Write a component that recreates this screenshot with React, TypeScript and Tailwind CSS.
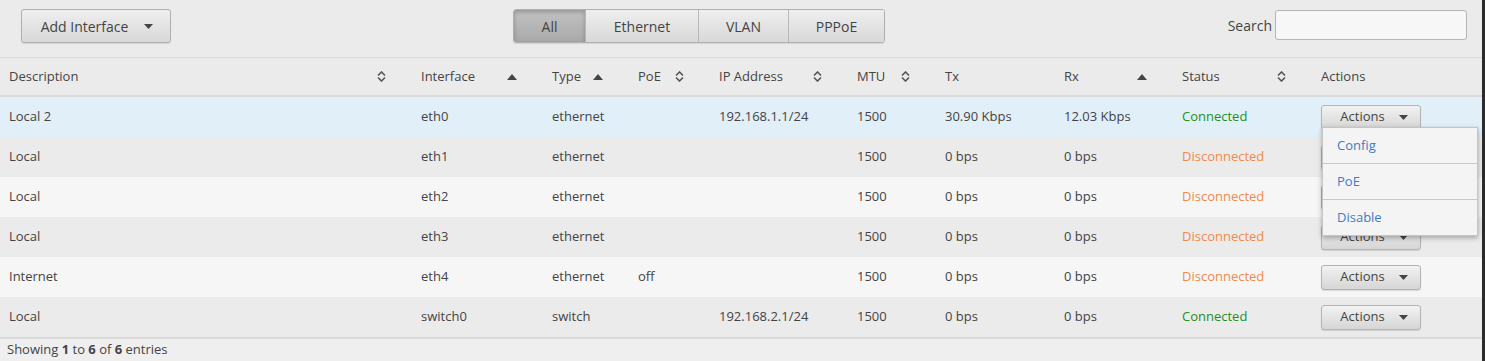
import React from 'react';

type Row = {
  desc: string;
  iface: string;
  type: string;
  poe: string;
  ip: string;
  mtu: string;
  tx: string;
  rx: string;
  connected: boolean;
};

const rows: Row[] = [
  { desc: 'Local 2', iface: 'eth0', type: 'ethernet', poe: '', ip: '192.168.1.1/24', mtu: '1500', tx: '30.90 Kbps', rx: '12.03 Kbps', connected: true },
  { desc: 'Local', iface: 'eth1', type: 'ethernet', poe: '', ip: '', mtu: '1500', tx: '0 bps', rx: '0 bps', connected: false },
  { desc: 'Local', iface: 'eth2', type: 'ethernet', poe: '', ip: '', mtu: '1500', tx: '0 bps', rx: '0 bps', connected: false },
  { desc: 'Local', iface: 'eth3', type: 'ethernet', poe: '', ip: '', mtu: '1500', tx: '0 bps', rx: '0 bps', connected: false },
  { desc: 'Internet', iface: 'eth4', type: 'ethernet', poe: 'off', ip: '', mtu: '1500', tx: '0 bps', rx: '0 bps', connected: false },
  { desc: 'Local', iface: 'switch0', type: 'switch', poe: '', ip: '192.168.2.1/24', mtu: '1500', tx: '0 bps', rx: '0 bps', connected: true },
];

const rowBg = ['bg-[#e1eff8]', 'bg-[#ebebeb]', 'bg-[#f6f6f6]', 'bg-[#ebebeb]', 'bg-[#f6f6f6]', 'bg-[#ebebeb]'];

function Caret() {
  return (
    <svg width="9" height="5" viewBox="0 0 9 5" className="inline-block">
      <path d="M0 0h9L4.5 5z" fill="#444" />
    </svg>
  );
}

function SortBoth() {
  return (
    <svg width="9" height="11" viewBox="0 0 9 11">
      <path d="M1 4.5 4.5 1 8 4.5M1 6.5 4.5 10 8 6.5" fill="none" stroke="#555" strokeWidth="1.6" />
    </svg>
  );
}

function SortAsc() {
  return (
    <svg width="10" height="6" viewBox="0 0 10 6">
      <path d="M0 6h10L5 0z" fill="#444" />
    </svg>
  );
}

const cols: { label: string; w: string; sort: 'both' | 'asc' | null }[] = [
  { label: 'Description', w: 'w-[412px]', sort: 'both' },
  { label: 'Interface', w: 'w-[131px]', sort: 'asc' },
  { label: 'Type', w: 'w-[86px]', sort: 'asc' },
  { label: 'PoE', w: 'w-[81px]', sort: 'both' },
  { label: 'IP Address', w: 'w-[138px]', sort: 'both' },
  { label: 'MTU', w: 'w-[88px]', sort: 'both' },
  { label: 'Tx', w: 'w-[119px]', sort: null },
  { label: 'Rx', w: 'w-[118px]', sort: 'asc' },
  { label: 'Status', w: 'w-[139px]', sort: 'both' },
  { label: 'Actions', w: 'flex-1', sort: null },
];

function ActionsButton() {
  return (
    <button className="flex h-[25px] w-[100px] items-center justify-center gap-[14px] rounded-[3px] border border-[#b3b3b3] bg-gradient-to-b from-[#f2f2f2] to-[#d6d6d6] pl-[6px] text-[13px] text-[#444] shadow-[0_1px_1px_rgba(0,0,0,0.12)]">
      <span>Actions</span>
      <Caret />
    </button>
  );
}

export default function App() {
  return (
    <div className="flex h-[361px] w-[1485px] bg-[#2b2b2b] font-['Open_Sans',sans-serif] text-[13px] text-[#444]">
      <div className="relative flex w-[1482px] flex-col bg-[#ebebeb]">
        {/* toolbar */}
        <div className="flex h-[58px] items-start border-b border-[#d9d9d9] pt-[9px]">
          <div className="w-[513px] pl-[21px]">
            <button className="flex h-[34px] w-[150px] items-center justify-center gap-[16px] rounded-[3px] border border-[#b0b0b0] bg-gradient-to-b from-[#efefef] to-[#d8d8d8] pl-[2px] text-[14px] text-[#444] shadow-[0_1px_1px_rgba(0,0,0,0.1)]">
              <span>Add Interface</span>
              <Caret />
            </button>
          </div>
          <div className="flex h-[34px] overflow-hidden rounded-[3px] border border-[#b0b0b0] text-[14px] shadow-[0_1px_1px_rgba(0,0,0,0.1)]">
            <div className="flex w-[71px] items-center justify-center bg-gradient-to-b from-[#c2c2c2] to-[#a9a9a9] shadow-[inset_0_2px_4px_rgba(0,0,0,0.25)]">All</div>
            <div className="flex w-[113px] items-center justify-center border-l border-[#b8b8b8] bg-gradient-to-b from-[#efefef] to-[#d8d8d8]">Ethernet</div>
            <div className="flex w-[90px] items-center justify-center border-l border-[#b8b8b8] bg-gradient-to-b from-[#efefef] to-[#d8d8d8]">VLAN</div>
            <div className="flex w-[96px] items-center justify-center border-l border-[#b8b8b8] bg-gradient-to-b from-[#efefef] to-[#d8d8d8]">PPPoE</div>
          </div>
          <div className="ml-auto flex items-center gap-[3px] pr-[15px] pt-[1px]">
            <span className="text-[14px]">Search</span>
            <input className="h-[30px] w-[192px] rounded-[3px] border border-[#b5b5b5] bg-[#f7f7f7] outline-none" />
          </div>
        </div>

        {/* header */}
        <div className="flex h-[39px] items-center border-b-2 border-[#d9d9d9]">
          {cols.map((c) => (
            <div key={c.label} className={`${c.w} flex items-center pl-[9px]`}>
              <span>{c.label}</span>
              {c.sort && (
                <span className="ml-auto mr-[26px] flex w-[10px] justify-center">
                  {c.sort === 'both' ? <SortBoth /> : <SortAsc />}
                </span>
              )}
            </div>
          ))}
        </div>

        {/* rows */}
        {rows.map((r, i) => (
          <div key={i} className={`flex h-[40px] items-center ${rowBg[i]}`}>
            <div className="w-[412px] pl-[9px]">{r.desc}</div>
            <div className="w-[131px] pl-[9px]">{r.iface}</div>
            <div className="w-[86px] pl-[9px]">{r.type}</div>
            <div className="w-[81px] pl-[9px]">{r.poe}</div>
            <div className="w-[138px] pl-[9px]">{r.ip}</div>
            <div className="w-[88px] pl-[9px]">{r.mtu}</div>
            <div className="w-[119px] pl-[9px]">{r.tx}</div>
            <div className="w-[118px] pl-[9px]">{r.rx}</div>
            <div className={`w-[139px] pl-[9px] ${r.connected ? 'text-[#1f8f1f]' : 'text-[#f08a4b]'}`}>
              {r.connected ? 'Connected' : 'Disconnected'}
            </div>
            <div className="flex-1 pl-[9px]">
              <ActionsButton />
            </div>
          </div>
        ))}

        {/* footer */}
        <div className="flex flex-1 items-center border-t-2 border-[#dadada] bg-[#efefef] pl-[7px]">
          <span>
            Showing <b className="font-bold">1</b> to <b className="font-bold">6</b> of <b className="font-bold">6</b> entries
          </span>
        </div>

        {/* dropdown menu */}
        <div className="absolute left-[1322px] top-[127px] w-[156px] border border-[#c4c4c4] bg-[#f4f4f4] shadow-[0_2px_5px_rgba(0,0,0,0.3)]">
          <div className="flex h-[36px] items-center border-b border-[#c8c8c8] pl-[14px] text-[13px] text-[#3b7dc4]">Config</div>
          <div className="flex h-[36px] items-center border-b border-[#c8c8c8] pl-[14px] text-[13px] text-[#3b7dc4]">PoE</div>
          <div className="flex h-[35px] items-center pl-[14px] text-[13px] text-[#3b7dc4]">Disable</div>
        </div>
      </div>
    </div>
  );
}
